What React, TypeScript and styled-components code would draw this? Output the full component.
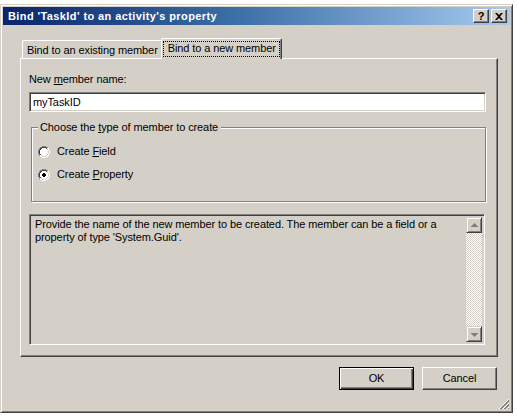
import React from "react";
import styled, { createGlobalStyle } from "styled-components";

const FACE = "#D4D0C8";
const SHADOW = "#808080";
const DARK = "#404040";

const Global = createGlobalStyle`
  html, body { margin: 0; padding: 0; background: #ffffff; }
  body { font-family: "Liberation Sans", Arial, sans-serif; font-size: 11px; color: #000; letter-spacing: -0.1px; }
  * { box-sizing: border-box; }
`;

const Window = styled.div`
  width: 513px;
  height: 409px;
  margin-top: 4px;
  background: ${FACE};
  border: 1px solid;
  border-color: ${FACE} ${DARK} ${DARK} ${FACE};
  box-shadow: inset 1px 1px 0 #fff, inset -1px -1px 0 ${SHADOW};
  padding: 2px;
  display: flex;
  flex-direction: column;
  position: relative;
`;

const TitleBar = styled.div`
  height: 18px;
  display: flex;
  align-items: center;
  padding: 0 3px 0 5px;
  background: linear-gradient(to right, #0a246a 0%, #3a6ea5 45%, #a6caf0 100%);
  color: #fff;
  font-weight: bold;
  font-size: 11px;
  letter-spacing: 0.4px;
`;

const TitleText = styled.span`
  flex: 1;
  white-space: nowrap;
`;

const CapButtons = styled.div`
  display: flex;
  gap: 2px;
`;

const CapButton = styled.div`
  width: 16px;
  height: 14px;
  background: ${FACE};
  border: 1px solid;
  border-color: #fff ${DARK} ${DARK} #fff;
  box-shadow: inset -1px -1px 0 ${SHADOW};
  display: flex;
  align-items: center;
  justify-content: center;
  color: #000;
  font-weight: bold;
  font-size: 11px;
  letter-spacing: 0;
  line-height: 1;
`;

const Body = styled.div`
  flex: 1;
  display: flex;
  flex-direction: column;
  padding: 13px 12px 0 17px;
`;

const TabStrip = styled.div`
  display: flex;
  align-items: flex-end;
  height: 21px;
  margin-bottom: -1px;
  padding-left: 2px;
  position: relative;
  z-index: 1;
`;

const Tab = styled.div<{ $active?: boolean }>`
  height: ${(p) => (p.$active ? 21 : 18)}px;
  padding: ${(p) => (p.$active ? "3px 2px 0 2px" : "3px 4px 0 4px")};
  margin-left: ${(p) => (p.$active ? "-2px" : "0")};
  margin-bottom: ${(p) => (p.$active ? "0" : "1px")};
  background: ${FACE};
  border-top: 1px solid #fff;
  border-left: 1px solid #fff;
  border-right: 1px solid ${DARK};
  box-shadow: inset -1px 0 0 ${SHADOW};
  border-top-left-radius: 2px;
  border-top-right-radius: 2px;
  white-space: nowrap;
  line-height: 13px;
`;

const Focus = styled.span`
  display: inline-block;
  outline: 1px dotted #000;
  outline-offset: 0;
  padding: 0 3px 1px 4px;
`;

const Panel = styled.div`
  width: 478px;
  height: 299px;
  background: ${FACE};
  border: 1px solid;
  border-color: #fff ${DARK} ${DARK} #fff;
  box-shadow: inset -1px -1px 0 ${SHADOW};
  padding: 14px 10px 0 8px;
  display: flex;
  flex-direction: column;
`;

const Label = styled.div`
  line-height: 13px;
  height: 13px;
`;

const U = styled.span`
  text-decoration: underline;
`;

const TextBox = styled.div`
  margin-top: 6px;
  height: 20px;
  background: #fff;
  border: 1px solid;
  border-color: ${SHADOW} #fff #fff ${SHADOW};
  box-shadow: inset 1px 1px 0 ${DARK}, inset -1px -1px 0 ${FACE};
  padding: 3px 3px 0 3px;
  line-height: 13px;
  width: 457px;
`;

const Group = styled.div`
  position: relative;
  margin: 15px 0 0 2px;
  width: 455px;
  height: 75px;
  border: 1px solid ${SHADOW};
  box-shadow: 1px 1px 0 #fff, inset 1px 1px 0 #fff;
  padding: 17px 0 0 6px;
  display: flex;
  flex-direction: column;
  gap: 10px;
`;

const Legend = styled.span`
  position: absolute;
  top: -7px;
  left: 6px;
  padding: 0 3px 0 2px;
  background: ${FACE};
  line-height: 13px;
`;

const RadioRow = styled.label`
  display: flex;
  align-items: center;
  gap: 7px;
  height: 13px;
  line-height: 13px;
`;

const Radio = ({ checked }: { checked?: boolean }) => (
  <svg width="12" height="12" viewBox="0 0 12 12">
    <path d="M4 0h4v1h2v1h1v2h1v4h-1v2h-1v1h-2v1h-4v-1h-2v-1h-1v-2h-1v-4h1v-2h1v-1h2z" fill="#fff" />
    <path d="M4 0h4v1H4zM2 1h2v1H2zM8 1h2v1H8zM1 2h1v2H1zM0 4h1v4H0zM1 8h1v2H1z" fill={SHADOW} />
    <path d="M10 2h1v2h-1zM11 4h1v4h-1zM10 8h1v2h-1zM8 10h2v1H8zM4 11h4v1H4zM2 10h2v1H2z" fill="#fff" />
    <path d="M4 1h4v1H4zM2 2h2v1H2zM8 2h1v1H8zM2 3h1v1H2zM1 4h1v4H1zM2 8h1v1H2z" fill={DARK} />
    <path d="M9 3h1v1H9zM10 4h1v4h-1zM9 8h1v1H9zM8 9h1v1H8zM4 10h4v1H4zM3 9h1v1H3z" fill={FACE} />
    {checked && <path d="M5 4h2v1h1v2h-1v1h-2v-1h-1v-2h1z" fill="#000" />}
  </svg>
);

const DescBox = styled.div`
  margin-top: 12px;
  width: 456px;
  height: 131px;
  border: 1px solid;
  border-color: ${SHADOW} #fff #fff ${SHADOW};
  box-shadow: inset 1px 1px 0 ${DARK}, inset -1px -1px 0 ${FACE};
  padding: 2px;
  display: flex;
`;

const DescText = styled.div`
  flex: 1;
  padding: 1px 3px;
  line-height: 13px;
`;

const ScrollBar = styled.div`
  width: 16px;
  display: flex;
  flex-direction: column;
  justify-content: space-between;
  background-color: #fff;
  background-image: conic-gradient(${FACE} 25%, #fff 0 50%, ${FACE} 0 75%, #fff 0);
  background-size: 2px 2px;
`;

const ScrollButton = styled.div`
  width: 16px;
  height: 16px;
  background: ${FACE};
  border: 1px solid;
  border-color: ${FACE} ${DARK} ${DARK} ${FACE};
  box-shadow: inset 1px 1px 0 #fff, inset -1px -1px 0 ${SHADOW};
  display: flex;
  align-items: center;
  justify-content: center;
`;

const Arrow = ({ up }: { up?: boolean }) => (
  <svg width="7" height="5" viewBox="0 0 7 5">
    <g transform={up ? "" : "rotate(180 3.5 2.5)"}>
      <path d="M3 0h1v1h1v1h1v1h1v1H0V3h1V2h1V1h1z" fill={SHADOW} />
    </g>
  </svg>
);

const Footer = styled.div`
  display: flex;
  justify-content: flex-end;
  gap: 8px;
  margin-top: 10px;
  padding-right: 1px;
`;

const Button = styled.div<{ $default?: boolean }>`
  width: 75px;
  height: 23px;
  background: ${FACE};
  display: flex;
  align-items: center;
  justify-content: center;
  border: 1px solid;
  border-color: ${(p) => (p.$default ? "#000" : `#fff ${DARK} ${DARK} #fff`)};
  box-shadow: ${(p) =>
    p.$default
      ? `inset 1px 1px 0 #fff, inset -1px -1px 0 ${DARK}, inset -2px -2px 0 ${SHADOW}`
      : `inset -1px -1px 0 ${SHADOW}`};
  line-height: 13px;
`;

const Gripper = styled.div`
  position: absolute;
  right: 2px;
  bottom: 2px;
  width: 12px;
  height: 12px;
  display: flex;
`;

export default function App() {
  return (
    <>
      <Global />
      <Window>
        <TitleBar>
          <TitleText>Bind 'TaskId' to an activity's property</TitleText>
          <CapButtons>
            <CapButton>?</CapButton>
            <CapButton>
              <svg width="8" height="7" viewBox="0 0 8 7">
                <path d="M0 0h2l2 2 2-2h2L5 3.5 8 7H6L4 5 2 7H0l3-3.5z" fill="#000" />
              </svg>
            </CapButton>
          </CapButtons>
        </TitleBar>
        <Body>
          <TabStrip>
            <Tab>Bind to an existing member</Tab>
            <Tab $active>
              <Focus>Bind to a new member</Focus>
            </Tab>
          </TabStrip>
          <Panel>
            <Label>
              New <U>m</U>ember name:
            </Label>
            <TextBox>myTaskID</TextBox>
            <Group>
              <Legend>
                Choose the <U>t</U>ype of member to create
              </Legend>
              <RadioRow>
                <Radio />
                <span>
                  Create <U>F</U>ield
                </span>
              </RadioRow>
              <RadioRow>
                <Radio checked />
                <span>
                  Create <U>P</U>roperty
                </span>
              </RadioRow>
            </Group>
            <DescBox>
              <DescText>
                Provide the name of the new member to be created. The member can be a field or a
                <br />
                property of type 'System.Guid'.
              </DescText>
              <ScrollBar>
                <ScrollButton>
                  <Arrow up />
                </ScrollButton>
                <ScrollButton>
                  <Arrow />
                </ScrollButton>
              </ScrollBar>
            </DescBox>
          </Panel>
          <Footer>
            <Button $default>OK</Button>
            <Button>Cancel</Button>
          </Footer>
        </Body>
        <Gripper>
          <svg width="12" height="12" viewBox="0 0 12 12">
            <path d="M11 1L1 11M11 5L5 11M11 9L9 11" stroke="#fff" strokeWidth="1" />
            <path d="M11 2L2 11M11 3L3 11M11 6L6 11M11 7L7 11M11 10L10 11" stroke={SHADOW} strokeWidth="1" />
          </svg>
        </Gripper>
      </Window>
    </>
  );
}
